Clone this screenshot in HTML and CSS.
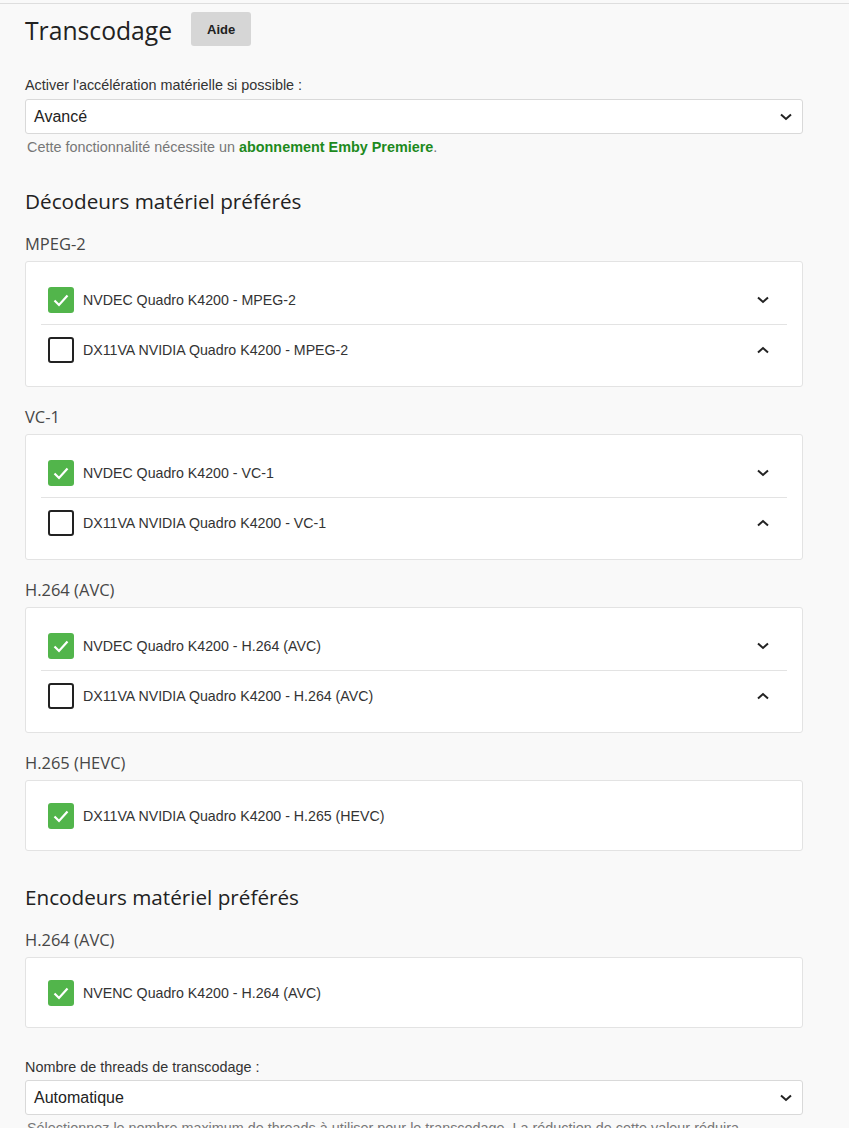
FILE: index.html
```html
<!DOCTYPE html>
<html lang="fr">

<head>
    <meta charset="UTF-8">
    <meta name="viewport" content="width=device-width, initial-scale=1.0">
    <title>Transcodage</title>
    <link rel="stylesheet" href="styles.css">
</head>

<body>
<div class="page">

    <div class="title-row">
        <h1>Transcodage</h1>
        <button class="btn-help">Aide</button>
    </div>

    <div class="field">
        <label class="field-label">Activer l'accélération matérielle si possible :</label>
        <div class="select">
            <span>Avancé</span>
            <svg class="chevron" viewBox="0 0 12 8"><path d="M1 1.5 L6 6 L11 1.5"/></svg>
        </div>
        <div class="field-help">Cette fonctionnalité nécessite un <a href="#">abonnement Emby Premiere</a>.</div>
    </div>

    <!-- decodeurs -->
    <h2 class="section-title">Décodeurs matériel préférés</h2>

    <h3 class="codec-title">MPEG-2</h3>
    <div class="card">
        <div class="card-row">
            <span class="check checked"><svg viewBox="0 0 26 26"><path d="M6.5 13.5 L11 18 L19.5 8.5"/></svg></span>
            <span class="row-text">NVDEC Quadro K4200 - MPEG-2</span>
            <span class="row-btn"><svg class="chevron" viewBox="0 0 12 8"><path d="M1 1.5 L6 6 L11 1.5"/></svg></span>
        </div>
        <div class="card-row">
            <span class="check"></span>
            <span class="row-text">DX11VA NVIDIA Quadro K4200 - MPEG-2</span>
            <span class="row-btn"><svg class="chevron" viewBox="0 0 12 8"><path d="M1 6.5 L6 2 L11 6.5"/></svg></span>
        </div>
    </div>

    <h3 class="codec-title">VC-1</h3>
    <div class="card">
        <div class="card-row">
            <span class="check checked"><svg viewBox="0 0 26 26"><path d="M6.5 13.5 L11 18 L19.5 8.5"/></svg></span>
            <span class="row-text">NVDEC Quadro K4200 - VC-1</span>
            <span class="row-btn"><svg class="chevron" viewBox="0 0 12 8"><path d="M1 1.5 L6 6 L11 1.5"/></svg></span>
        </div>
        <div class="card-row">
            <span class="check"></span>
            <span class="row-text">DX11VA NVIDIA Quadro K4200 - VC-1</span>
            <span class="row-btn"><svg class="chevron" viewBox="0 0 12 8"><path d="M1 6.5 L6 2 L11 6.5"/></svg></span>
        </div>
    </div>

    <h3 class="codec-title">H.264 (AVC)</h3>
    <div class="card">
        <div class="card-row">
            <span class="check checked"><svg viewBox="0 0 26 26"><path d="M6.5 13.5 L11 18 L19.5 8.5"/></svg></span>
            <span class="row-text">NVDEC Quadro K4200 - H.264 (AVC)</span>
            <span class="row-btn"><svg class="chevron" viewBox="0 0 12 8"><path d="M1 1.5 L6 6 L11 1.5"/></svg></span>
        </div>
        <div class="card-row">
            <span class="check"></span>
            <span class="row-text">DX11VA NVIDIA Quadro K4200 - H.264 (AVC)</span>
            <span class="row-btn"><svg class="chevron" viewBox="0 0 12 8"><path d="M1 6.5 L6 2 L11 6.5"/></svg></span>
        </div>
    </div>

    <h3 class="codec-title">H.265 (HEVC)</h3>
    <div class="card card-single">
        <div class="card-row">
            <span class="check checked"><svg viewBox="0 0 26 26"><path d="M6.5 13.5 L11 18 L19.5 8.5"/></svg></span>
            <span class="row-text">DX11VA NVIDIA Quadro K4200 - H.265 (HEVC)</span>
        </div>
    </div>

    <!-- encodeurs -->
    <h2 class="section-title">Encodeurs matériel préférés</h2>

    <h3 class="codec-title">H.264 (AVC)</h3>
    <div class="card card-single">
        <div class="card-row">
            <span class="check checked"><svg viewBox="0 0 26 26"><path d="M6.5 13.5 L11 18 L19.5 8.5"/></svg></span>
            <span class="row-text">NVENC Quadro K4200 - H.264 (AVC)</span>
        </div>
    </div>

    <div class="field field-threads">
        <label class="field-label">Nombre de threads de transcodage :</label>
        <div class="select">
            <span>Automatique</span>
            <svg class="chevron" viewBox="0 0 12 8"><path d="M1 1.5 L6 6 L11 1.5"/></svg>
        </div>
        <div class="field-help">Sélectionnez le nombre maximum de threads à utiliser pour le transcodage. La réduction de cette valeur réduira l'utilisation du processeur.</div>
    </div>

</div>
</body>

</html>
```

FILE: styles.css
```css
body {
    margin: 0;
    padding-top: 3px;
    background-color: #f9f9f9;
    font-family: "Liberation Sans", Arial, sans-serif;
    color: #222;
}

.page {
    border-top: 1px solid #dedede;
    padding: 8px 25px 40px;
}

.page > * {
    box-sizing: border-box;
    max-width: 778px;
}

.title-row {
    display: flex;
    align-items: flex-start;
    gap: 19px;
}

h1 {
    margin: 0;
    padding-top: 2px;
    font-family: "Open Sans", "Noto Sans", sans-serif;
    font-size: 24.7px;
    font-weight: 400;
    line-height: 34px;
    color: #222;
}

.btn-help {
    height: 34px;
    padding: 0 16px;
    background-color: #d6d6d6;
    border: none;
    border-radius: 3px;
    font-family: "Liberation Sans", Arial, sans-serif;
    font-size: 13px;
    font-weight: bold;
    color: #222;
}

.field {
    margin-top: 29px;
}

.field-label {
    display: block;
    font-size: 14.4px;
    line-height: 16px;
    color: #333;
}

.select {
    display: flex;
    align-items: center;
    justify-content: space-between;
    box-sizing: border-box;
    height: 35px;
    margin-top: 6px;
    padding: 0 10px 0 8px;
    background-color: #fff;
    border: 1px solid #d9d9d9;
    border-radius: 3px;
    font-size: 16px;
    color: #222;
}

.chevron {
    width: 12px;
    height: 8px;
    fill: none;
    stroke: #222;
    stroke-width: 2;
}

.field-help {
    margin-top: 5px;
    padding-left: 2px;
    font-size: 14.4px;
    line-height: 16px;
    color: #777;
}

.field-help a {
    color: #1d8a1d;
    font-weight: bold;
    text-decoration: none;
}

.section-title {
    margin: 32px 0 0;
    font-family: "Open Sans", "Noto Sans", sans-serif;
    font-size: 20.7px;
    font-weight: 400;
    line-height: 28px;
    color: #222;
}

.codec-title {
    margin: 19px 0 0;
    font-family: "Open Sans", "Noto Sans", sans-serif;
    font-size: 16.5px;
    font-weight: 400;
    line-height: 20px;
    color: #474747;
}

.card + .codec-title {
    margin-top: 20px;
}

.card {
    margin-top: 7px;
    padding: 13px 15px 12px;
    background-color: #fff;
    border: 1px solid #e3e3e3;
    border-radius: 3px;
}

.card-single {
    padding: 10px 15px;
}

.card-row {
    display: flex;
    align-items: center;
    height: 49px;
    padding-left: 7px;
}

.card-row + .card-row {
    border-top: 1px solid #e3e3e3;
}

.check {
    box-sizing: border-box;
    width: 26px;
    height: 26px;
    margin-right: 9px;
    border: 2px solid #222;
    border-radius: 3px;
    flex-shrink: 0;
}

.check.checked {
    background-color: #52b54b;
    border: none;
}

.check svg {
    display: block;
    width: 26px;
    height: 26px;
    fill: none;
    stroke: #fff;
    stroke-width: 2.2;
}

.row-text {
    flex: 1;
    font-size: 14.2px;
    color: #333;
}

.row-btn {
    display: flex;
    align-items: center;
    justify-content: center;
    width: 40px;
    height: 40px;
    margin-right: 4px;
}

.card-single + .field-threads {
    margin-top: 31px;
}

.field-threads .select {
    margin-top: 5px;
}
```
